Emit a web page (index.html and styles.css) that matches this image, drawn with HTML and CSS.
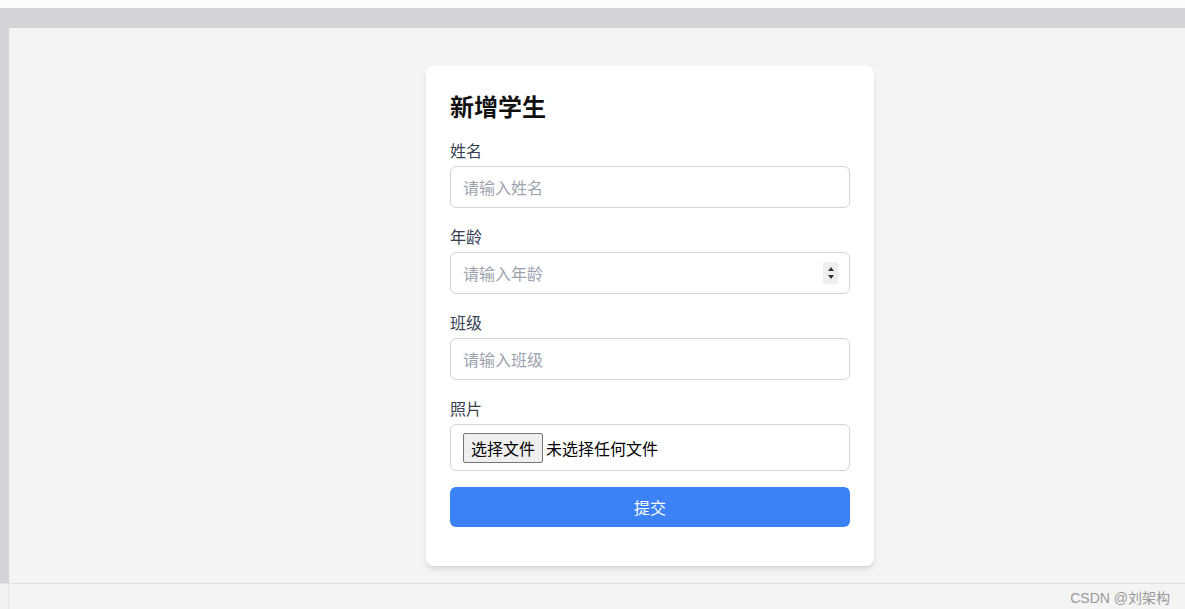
FILE: index.html
```html
<!DOCTYPE html>
<html lang="zh-CN">
<head>
    <meta charset="UTF-8">
    <meta name="viewport" content="width=device-width, initial-scale=1.0">
    <title>新增学生</title>
    <link rel="stylesheet" href="styles.css">
</head>
<body>
    <div class="top-strip"></div>
    <div class="frame">
        <div class="side-strip"></div>
        <div class="main">
            <!-- Student form -->
            <form class="card" onsubmit="return false">
                <h2>新增学生</h2>
                <div class="input-group">
                    <label for="name">姓名</label>
                    <input type="text" id="name" placeholder="请输入姓名">
                </div>
                <div class="input-group">
                    <label for="age">年龄</label>
                    <div class="number-box">
                        <input type="text" id="age" placeholder="请输入年龄">
                        <span class="spinner">
                            <svg width="10" height="20" viewBox="0 0 10 20"><path d="M2 8 L5 4 L8 8 Z" fill="#333"/><path d="M2 12 L5 16 L8 12 Z" fill="#333"/></svg>
                        </span>
                    </div>
                </div>
                <div class="input-group">
                    <label for="class">班级</label>
                    <input type="text" id="class" placeholder="请输入班级">
                </div>
                <div class="input-group">
                    <label>照片</label>
                    <div class="file-box">
                        <span class="file-btn">选择文件</span>
                        <span class="file-name">未选择任何文件</span>
                    </div>
                </div>
                <button class="submit-btn" type="submit">提交</button>
            </form>
        </div>
    </div>
    <div class="bottom">
        <div class="bottom-side"></div>
        <span class="watermark">CSDN @刘架构</span>
    </div>
</body>
</html>
```
FILE: styles.css
```css
* {
    margin: 0;
    padding: 0;
    box-sizing: border-box;
    font-family: "Noto Sans CJK SC", "Liberation Sans", sans-serif;
}
body {
    background: #f3f3f4;
    height: 609px;
    overflow: hidden;
}
.top-strip {
    height: 28px;
    background: #d4d4d8;
    border-top: 8px solid #fbfbfb;
}
.frame {
    display: flex;
    height: 555px;
}
.side-strip {
    width: 9px;
    background: #d4d4d8;
}
.main {
    flex: 1;
    background: #f4f4f4;
    display: flex;
    justify-content: center;
    padding-top: 38px;
    padding-left: 106px;
}
.card {
    width: 448px;
    height: 500px;
    background: white;
    border-radius: 8px;
    padding: 24px 24px 38px;
    box-shadow: 0 4px 6px -1px rgba(0, 0, 0, 0.1), 0 2px 4px -2px rgba(0, 0, 0, 0.1);
}
h2 {
    font-size: 24px;
    line-height: 32px;
    font-weight: bold;
    color: #111;
    margin-bottom: 16px;
}
.input-group {
    margin-bottom: 16px;
}
.input-group label {
    display: block;
    font-size: 16px;
    line-height: 24px;
    color: #374151;
    margin-bottom: 4px;
}
.input-group input {
    display: block;
    width: 100%;
    height: 42px;
    padding: 8px 12px;
    border: 1px solid #d1d5db;
    border-radius: 6px;
    font-size: 16px;
    line-height: 24px;
    color: #111;
    outline: none;
}
.input-group input::placeholder {
    color: #9ca3af;
}
.number-box {
    position: relative;
}
.spinner {
    position: absolute;
    right: 12px;
    top: 10px;
    width: 15px;
    height: 22px;
    background: #efefef;
    display: flex;
    align-items: center;
    justify-content: center;
}
.file-box {
    display: flex;
    align-items: center;
    height: 47px;
    padding: 0 12px;
    border: 1px solid #d1d5db;
    border-radius: 6px;
}
.file-btn {
    height: 30px;
    padding: 0 7px;
    border: 1px solid #767676;
    border-radius: 2px;
    background: #efefef;
    font-size: 16px;
    line-height: 28px;
    color: #000;
}
.file-name {
    margin-left: 3px;
    font-size: 16px;
    color: #000;
}
.submit-btn {
    display: block;
    width: 100%;
    height: 40px;
    background: #3b82f6;
    border: none;
    border-radius: 6px;
    color: white;
    font-size: 16px;
    cursor: pointer;
}
.bottom {
    height: 26px;
    border-top: 1px solid #e0e0e0;
    background: #f4f4f4;
    display: flex;
    align-items: center;
    padding-right: 15px;
}
.bottom-side {
    width: 9px;
    height: 100%;
    background: #f1f1f1;
    border-right: 1px solid #e6e6e6;
    margin-right: auto;
}
.watermark {
    font-family: "Liberation Sans", "Noto Sans CJK SC", sans-serif;
    font-size: 14px;
    color: #999;
}
```
